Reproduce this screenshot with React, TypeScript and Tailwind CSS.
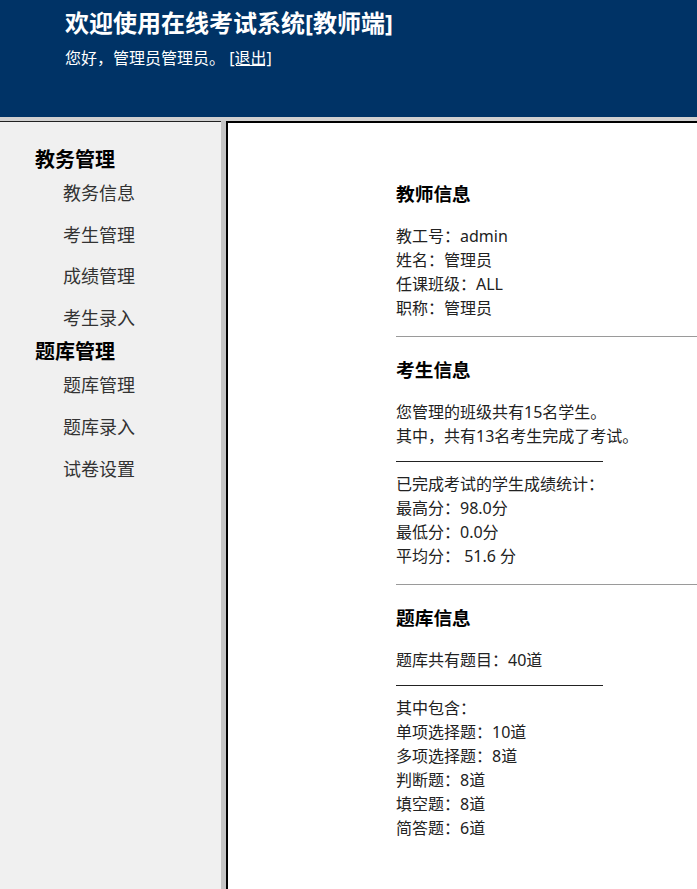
const font = { fontFamily: '"Noto Sans", "Noto Sans CJK SC", sans-serif' }

const sideGroups = [
  { title: '教务管理', items: ['教务信息', '考生管理', '成绩管理', '考生录入'] },
  { title: '题库管理', items: ['题库管理', '题库录入', '试卷设置'] },
]

function Line({ children }: { children: React.ReactNode }) {
  return <div className="leading-[24px] whitespace-pre">{children}</div>
}

// a rule drawn as a line of dashes in the original page
function Dash() {
  return (
    <div className="h-[24px] pt-[13px]">
      <div className="w-[207px] h-px bg-[#222]" />
    </div>
  )
}

function Section({ title, first, children }: { title: string; first?: boolean; children: React.ReactNode }) {
  return (
    <section className={first ? '' : 'mt-[20px]'}>
      <h3 className="text-[18.72px] font-bold leading-[25px] text-black">{title}</h3>
      <div className="mt-[18px] text-[16px] text-[#222]">{children}</div>
    </section>
  )
}

export default function App() {
  return (
    <div className="flex flex-col h-screen bg-white overflow-hidden" style={font}>
      {/* Header */}
      <header className="h-[117px] shrink-0 bg-[#003366] pl-[65px] pt-[7px] text-white">
        <h1 className="text-[24px] font-bold leading-[32px]">欢迎使用在线考试系统[教师端]</h1>
        <p className="mt-[7px] text-[16px] leading-[24px] whitespace-pre">
          您好，管理员管理员。 <a className="underline">[退出]</a>
        </p>
      </header>
      <div className="h-[4px] shrink-0 bg-[#d0d0d0]" />

      <div className="flex flex-1 min-h-0">
        {/* Sidebar */}
        <aside className="w-[221px] shrink-0 bg-[#f0f0f0] border-t border-[#222] pt-[25px]">
          {sideGroups.map(g => (
            <div key={g.title}>
              <div className="pl-[35px] text-[20px] font-bold leading-[26px] text-black">{g.title}</div>
              {g.items.map(item => (
                <div key={item} className="pl-[63px] text-[18px] leading-[41.6px] text-[#333]">
                  {item}
                </div>
              ))}
            </div>
          ))}
        </aside>
        <div className="w-[5px] shrink-0 bg-[#c4c4c4]" />

        {/* Main */}
        <main className="flex-1 min-w-0 bg-white border-t-2 border-l-2 border-black pt-[58px] pl-[168px]">
          <Section title="教师信息" first>
            <Line>教工号：admin</Line>
            <Line>姓名：管理员</Line>
            <Line>任课班级：ALL</Line>
            <Line>职称：管理员</Line>
          </Section>
          <hr className="mt-[16px] border-0 border-t border-[#9a9a9a]" />

          <Section title="考生信息">
            <Line>您管理的班级共有15名学生。</Line>
            <Line>其中，共有13名考生完成了考试。</Line>
            <Dash />
            <Line>已完成考试的学生成绩统计：</Line>
            <Line>最高分：98.0分</Line>
            <Line>最低分：0.0分</Line>
            <Line>平均分： 51.6 分</Line>
          </Section>
          <hr className="mt-[16px] border-0 border-t border-[#9a9a9a]" />

          <Section title="题库信息">
            <Line>题库共有题目：40道</Line>
            <Dash />
            <Line>其中包含：</Line>
            <Line>单项选择题：10道</Line>
            <Line>多项选择题：8道</Line>
            <Line>判断题：8道</Line>
            <Line>填空题：8道</Line>
            <Line>简答题：6道</Line>
          </Section>
        </main>
      </div>
    </div>
  )
}
